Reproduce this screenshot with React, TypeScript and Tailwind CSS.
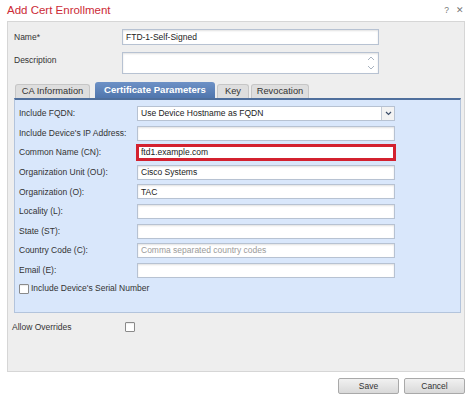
import React from "react";

const Input = ({ value, placeholder, w = "w-[258px]" }: { value?: string; placeholder?: string; w?: string }) => (
  <div
    className={`${w} h-[15px] bg-white border border-[#b7c2d2] shadow-[inset_0_1px_2px_rgba(0,0,0,0.12)] flex items-center pl-[3px] text-[8.5px] ${
      placeholder ? "text-[#9a9a9a]" : "text-[#222]"
    } whitespace-nowrap overflow-hidden`}
  >
    {value ?? placeholder}
  </div>
);

const Row = ({ label, children }: { label: string; children: React.ReactNode }) => (
  <div className="flex h-[19.6px] items-start">
    <div className="w-[122px] pl-[4px] h-[15px] flex items-center text-[8.5px] text-[#333] whitespace-nowrap">{label}</div>
    {children}
  </div>
);

const Checkbox = () => (
  <div className="w-[10px] h-[10px] bg-white border border-[#8a8a8a] rounded-[1px] shadow-[inset_0_1px_1px_rgba(0,0,0,0.08)]" />
);

export default function App() {
  return (
    <div className="w-[473px] h-[399px] bg-white font-['Liberation_Sans',Arial,sans-serif] text-[#333] overflow-hidden">
      {/* Title */}
      <div className="h-[21px] flex items-center pl-[7px] pr-[9px]">
        <span className="text-[11.5px] text-[#cc2a36] leading-none">Add Cert Enrollment</span>
        <span className="ml-auto text-[8.5px] text-[#777]">?</span>
        <span className="ml-[7px] text-[9px] text-[#777]">✕</span>
      </div>

      {/* Gray panel */}
      <div className="ml-[7px] w-[458px] h-[351px] bg-[#eeeeee] border border-[#d6d6d6] pt-[7px] flex flex-col">
        {/* Name */}
        <div className="flex items-center h-[16px]">
          <div className="w-[114px] pl-[6px] text-[8.5px]">Name*</div>
          <div className="w-[257px] h-[16px] bg-white border border-[#b7c2d2] shadow-[inset_0_1px_2px_rgba(0,0,0,0.12)] flex items-center pl-[3px] text-[8.5px] text-[#222]">
            FTD-1-Self-Signed
          </div>
        </div>
        {/* Description */}
        <div className="flex items-start mt-[7px]">
          <div className="w-[114px] pl-[6px] text-[8.5px] pt-[2px]">Description</div>
          <div className="w-[257px] h-[22px] bg-white border border-[#b7c2d2] shadow-[inset_0_1px_2px_rgba(0,0,0,0.12)] flex justify-end pr-[2px]">
            <svg width="10" height="20" viewBox="0 0 10 20">
              <path d="M2 7 L5 4 L8 7" fill="none" stroke="#a9b3c0" strokeWidth="1" />
              <path d="M2 13 L5 16 L8 13" fill="none" stroke="#a9b3c0" strokeWidth="1" />
            </svg>
          </div>
        </div>

        {/* Tabs */}
        <div className="flex items-end h-[16px] mt-[8px] pl-[7px]">
          <div className="w-[75px] h-[14px] bg-[#dedede] border border-b-0 border-[#c6c6c6] rounded-t-[3px] flex items-center justify-center text-[9.3px] text-[#333]">
            CA Information
          </div>
          <div className="ml-[5px] w-[120px] h-[16px] bg-gradient-to-b from-[#6d91c6] to-[#5076ad] rounded-t-[3px] flex items-center justify-center text-[9.6px] font-bold text-white">
            Certificate Parameters
          </div>
          <div className="ml-[2px] w-[32px] h-[14px] bg-[#dedede] border border-b-0 border-[#c6c6c6] rounded-t-[3px] flex items-center justify-center text-[9.3px] text-[#333]">
            Key
          </div>
          <div className="ml-[2px] w-[58px] h-[14px] bg-[#dedede] border border-b-0 border-[#c6c6c6] rounded-t-[3px] flex items-center justify-center text-[9.3px] text-[#333]">
            Revocation
          </div>
        </div>

        {/* Blue panel */}
        <div className="ml-[6px] w-[447px] h-[215px] bg-[#d9e7fb] border border-[#b3c4dc] border-t-2 border-t-[#4f6f9c] pt-[6px] flex flex-col">
          <Row label="Include FQDN:">
            <div className="w-[258px] h-[15px] bg-white border border-[#b7c2d2] flex items-center text-[8.5px] text-[#222]">
              <span className="pl-[3px] flex-1 whitespace-nowrap">Use Device Hostname as FQDN</span>
              <div className="w-[13px] h-full border-l border-[#c4cbd6] bg-[#f3f3f3] flex items-center justify-center">
                <svg width="7" height="5" viewBox="0 0 7 5">
                  <path d="M1 1 L3.5 3.5 L6 1" fill="none" stroke="#3d4f6b" strokeWidth="1.2" />
                </svg>
              </div>
            </div>
          </Row>
          <Row label="Include Device's IP Address:">
            <Input />
          </Row>
          <Row label="Common Name (CN):">
            <div className="-ml-[1px] -mt-[1px] w-[260px] h-[17px] bg-white border-[3px] border-[#d3212f] flex items-center pl-[2px] text-[8.5px] text-[#222]">
              ftd1.example.com
            </div>
          </Row>
          <Row label="Organization Unit (OU):">
            <Input value="Cisco Systems" />
          </Row>
          <Row label="Organization (O):">
            <Input value="TAC" />
          </Row>
          <Row label="Locality (L):">
            <Input />
          </Row>
          <Row label="State (ST):">
            <Input />
          </Row>
          <Row label="Country Code (C):">
            <Input placeholder="Comma separated country codes" />
          </Row>
          <Row label="Email (E):">
            <Input />
          </Row>
          <div className="flex items-center pl-[4px]">
            <Checkbox />
            <span className="ml-[2px] text-[8.5px] text-[#333]">Include Device's Serial Number</span>
          </div>
        </div>

        {/* Allow overrides */}
        <div className="flex items-center mt-[9px] h-[10px]">
          <div className="w-[117px] pl-[4px] text-[8.5px] text-[#333]">Allow Overrides</div>
          <Checkbox />
        </div>
      </div>

      {/* Buttons */}
      <div className="flex justify-end gap-[5px] pr-[8px] mt-[6px]">
        <div className="w-[61px] h-[16px] rounded-[2px] border border-[#a9a9a9] bg-gradient-to-b from-[#f1f1f1] to-[#d9d9d9] flex items-center justify-center text-[8.5px] text-[#333]">
          Save
        </div>
        <div className="w-[61px] h-[16px] rounded-[2px] border border-[#a9a9a9] bg-gradient-to-b from-[#f1f1f1] to-[#d9d9d9] flex items-center justify-center text-[8.5px] text-[#333]">
          Cancel
        </div>
      </div>
    </div>
  );
}
